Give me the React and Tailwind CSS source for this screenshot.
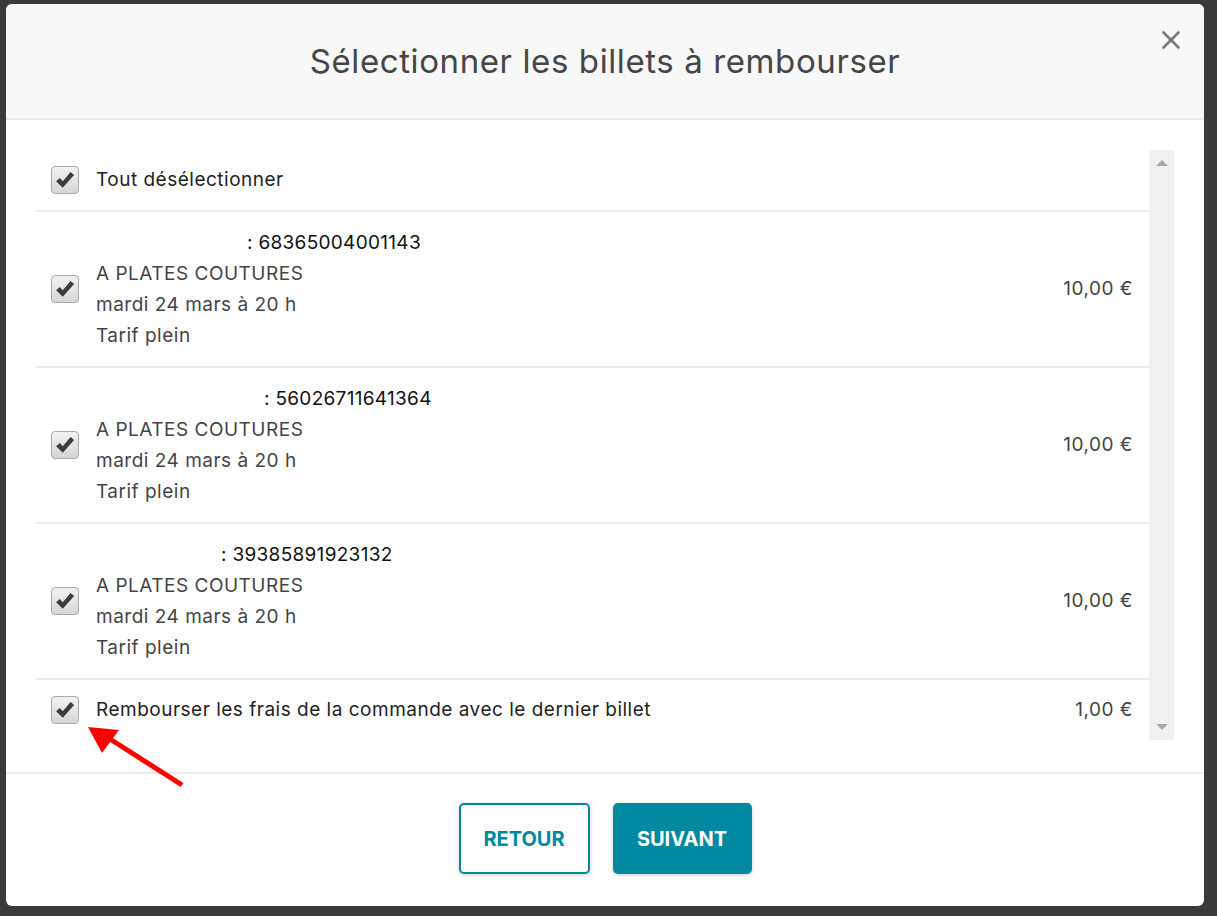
import { X } from 'lucide-react'

const tickets = [
  { num: '68365004001143', pad: 'pl-[151px]' },
  { num: '56026711641364', pad: 'pl-[168px]' },
  { num: '39385891923132', pad: 'pl-[125px]' },
]

function Check() {
  return (
    <span className="flex h-[28px] w-[28px] shrink-0 items-center justify-center rounded-[4px] border border-[#a9a9a9] bg-gradient-to-b from-[#f2f2f2] to-[#d6d6d6]">
      <svg width="20" height="18" viewBox="0 0 18 16">
        <path d="M1 9.2 L4.3 6.2 L7 9.2 L14 0.8 L17.2 3.6 L7 15 Z" fill="#3d3d3d" />
      </svg>
    </span>
  )
}

export default function App() {
  return (
    <div className="relative h-[916px] w-[1217px] overflow-hidden bg-[#3a3a3a] pl-[6px] pt-[4px] font-['Inter',sans-serif]">
      <div className="flex h-[902px] w-[1198px] flex-col overflow-hidden rounded-[6px] bg-white">
        <header className="relative flex h-[116px] shrink-0 items-center justify-center border-b-2 border-[#ebebeb] bg-[#f8f8f8]">
          <h1 className="pt-[2px] text-[33px] font-normal tracking-[0.6px] text-[#454545]">Sélectionner les billets à rembourser</h1>
          <X className="absolute right-[18px] top-[21px] text-[#7a7a7a]" size={30} strokeWidth={2.2} />
        </header>

        <main className="flex px-[30px] pb-[32px] pt-[30px]">
          <div className="flex-1 text-[19px] tracking-[0.5px] text-[#444]">
            <div className="flex h-[62px] items-center gap-[17px] border-b-2 border-[#ebebeb] pl-[15px]">
              <Check />
              <span className="text-[#222]">Tout désélectionner</span>
            </div>
            {tickets.map((t) => (
              <div key={t.num} className="flex h-[156px] items-center gap-[17px] border-b-2 border-[#ebebeb] pl-[15px] pr-[16px]">
                <Check />
                <div className="flex-1 leading-[31px]">
                  <div className={`${t.pad} tracking-[0.3px] text-[#111]`}>: {t.num}</div>
                  <div>A PLATES COUTURES</div>
                  <div>mardi 24 mars à 20 h</div>
                  <div>Tarif plein</div>
                </div>
                <span>10,00 €</span>
              </div>
            ))}
            <div className="flex h-[60px] items-center gap-[17px] pl-[15px] pr-[16px]">
              <Check />
              <span className="flex-1 text-[#222]">Rembourser les frais de la commande avec le dernier billet</span>
              <span>1,00 €</span>
            </div>
          </div>
          <div className="flex w-[25px] flex-col items-center justify-between bg-[#f0f0f0] py-[10px]">
            <span className="h-0 w-0 border-x-[6px] border-b-[6px] border-x-transparent border-b-[#a8a8a8]" />
            <span className="h-0 w-0 border-x-[6px] border-t-[6px] border-x-transparent border-t-[#a8a8a8]" />
          </div>
        </main>

        <footer className="flex flex-1 justify-center gap-[23px] border-t-2 border-[#ebebeb] pt-[29px]">
          <button className="h-[71px] w-[131px] rounded-[5px] border-2 border-[#0089a0] bg-white text-[20px] font-bold text-[#0089a0] shadow-[0_1px_4px_rgba(0,0,0,0.2)]">RETOUR</button>
          <button className="h-[71px] w-[139px] rounded-[5px] bg-[#0089a0] text-[20px] font-bold text-white shadow-[0_1px_4px_rgba(0,0,0,0.2)]">SUIVANT</button>
        </footer>
      </div>

      <svg className="absolute left-[80px] top-[720px]" width="110" height="70" viewBox="0 0 110 70">
        <line x1="102" y1="65" x2="30" y2="19" stroke="#f00" strokeWidth="5" />
        <polygon points="8,7 39,10 22,33" fill="#f00" />
      </svg>
    </div>
  )
}
